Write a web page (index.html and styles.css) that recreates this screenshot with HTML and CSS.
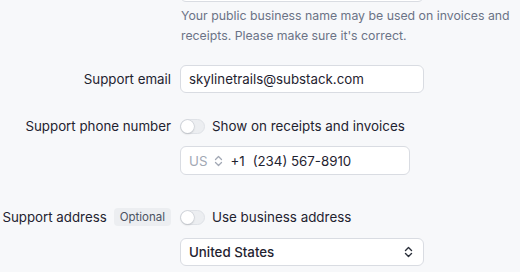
FILE: index.html
```html
<!DOCTYPE html>
<html>
<head>
<meta charset="utf-8">
<link rel="stylesheet" href="styles.css">
</head>
<body>
<div class="form">
  <div class="field field-name">
    <div class="label"></div>
    <div class="control">
      <div class="input"></div>
      <p class="help">Your public business name may be used on invoices and<br>receipts. Please make sure it's correct.</p>
    </div>
  </div>

  <div class="field field-email">
    <div class="label label-input">Support email</div>
    <div class="control">
      <div class="input"><span class="value">skylinetrails@substack.com</span></div>
    </div>
  </div>

  <div class="field field-phone">
    <div class="label label-line">Support phone number</div>
    <div class="control">
      <div class="toggle-line">
        <span class="toggle"><span class="knob"></span></span>
        <span class="toggle-text">Show on receipts and invoices</span>
      </div>
      <div class="input input-phone">
        <span class="country">US</span>
        <svg class="chev chev-light" width="9" height="12" viewBox="0 0 9 12"><path d="M1.5 4.5 L4.5 1.5 L7.5 4.5 M1.5 7.5 L4.5 10.5 L7.5 7.5" fill="none" stroke="currentColor" stroke-width="1.3" stroke-linecap="round" stroke-linejoin="round"/></svg>
        <span class="value code">+1</span>
        <span class="value">(234) 567-8910</span>
      </div>
    </div>
  </div>

  <div class="field field-address">
    <div class="label label-line label-address">Support address <span class="badge">Optional</span></div>
    <div class="control">
      <div class="toggle-line">
        <span class="toggle"><span class="knob"></span></span>
        <span class="toggle-text">Use business address</span>
      </div>
      <div class="input select">
        <span class="value strong">United States</span>
        <svg class="chev" width="9" height="12" viewBox="0 0 9 12"><path d="M1.5 4.5 L4.5 1.5 L7.5 4.5 M1.5 7.5 L4.5 10.5 L7.5 7.5" fill="none" stroke="currentColor" stroke-width="1.4" stroke-linecap="round" stroke-linejoin="round"/></svg>
      </div>
    </div>
  </div>
</div>
</body>
</html>
```

FILE: styles.css
```css
* { box-sizing: border-box; }
html, body { margin: 0; padding: 0; }
body {
  background: #f7f8fa;
  font-family: Inter, "Noto Sans", sans-serif;
  color: #1f2330;
  width: 520px;
  height: 272px;
  overflow: hidden;
}
.form {
  display: flex;
  flex-direction: column;
  margin-top: -26px;
}
.field {
  display: flex;
  align-items: flex-start;
  gap: 9px;
}
.label {
  width: 171px;
  flex: none;
  display: flex;
  justify-content: flex-end;
  align-items: center;
  gap: 9px;
  font-size: 13.3px;
  color: #1f2330;
  white-space: nowrap;
}
.label-input { height: 28px; }
.label-line { height: 20px; }
.label-address { gap: 7px; }
.control {
  display: flex;
  flex-direction: column;
  flex: none;
}
.input {
  width: 244px;
  height: 28px;
  background: #fff;
  border: 1px solid #d9dce2;
  border-radius: 6px;
  display: flex;
  align-items: center;
  padding: 0 8px;
  font-size: 13.3px;
  color: #1f2330;
}
.help {
  margin: 4px 0 0 1px;
  font-size: 12.3px;
  line-height: 20px;
  color: #6b7386;
  white-space: nowrap;
}
.field-email { margin-top: 19px; }
.field-phone { margin-top: 23px; }
.field-address { margin-top: 32px; }
.toggle-line {
  height: 20px;
  display: flex;
  align-items: center;
  gap: 7px;
}
.toggle {
  width: 25px;
  height: 15px;
  border-radius: 8px;
  background: #eceef1;
  border: 1px solid #dfe2e7;
  position: relative;
  flex: none;
}
.knob {
  position: absolute;
  left: 0;
  top: 0;
  width: 13px;
  height: 13px;
  border-radius: 50%;
  background: #fff;
  box-shadow: 0 0 0 0.5px #c9cdd4, 0 1px 2px rgba(0,0,0,0.2);
}
.toggle-text { font-size: 13.4px; color: #1f2330; }
.input-phone { width: 230px; height: 29px; }
.country { color: #a2a8b4; }
.chev { flex: none; color: #2a2f3a; }
.chev-light { color: #a2a8b4; margin: 0 7px 0 7px; }
.code { margin-right: 8px; }
.select { justify-content: space-between; padding-right: 10px; }
.field-phone .control { gap: 10px; }
.field-address .control { gap: 11px; }
.strong { font-weight: 500; }
.badge {
  font-size: 11.5px;
  color: #4b5262;
  background: #eceef1;
  border-radius: 4px;
  padding: 2px 6px;
  line-height: 14px;
}
```
